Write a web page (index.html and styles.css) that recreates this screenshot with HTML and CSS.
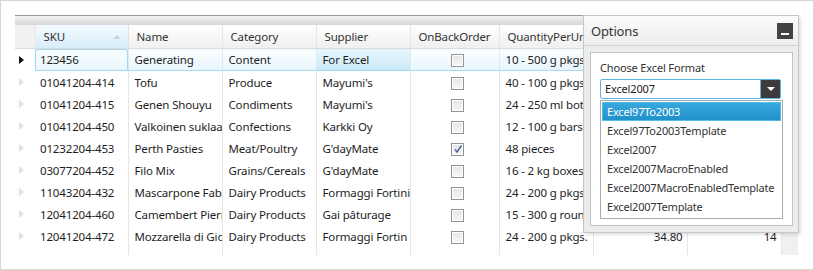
FILE: index.html
```html
<!DOCTYPE html>
<html lang="en">
<head>
  <meta charset="UTF-8" />
  <title>Export to Excel</title>
  <link rel="stylesheet" href="styles.css">
</head>
<body>
  <div class="frame">
    <div class="grid">
      <div class="hscroll"></div>
      <div class="grid-main">
        <table class="data">
          <colgroup>
            <col class="c-rh"><col class="c-sku"><col class="c-std"><col class="c-std"><col class="c-std">
            <col class="c-chk"><col class="c-std"><col class="c-std"><col class="c-std">
          </colgroup>
          <thead>
            <tr>
              <th class="rh"></th>
              <th class="sorted">SKU<span class="sort-arrow"></span></th>
              <th>Name</th>
              <th>Category</th>
              <th>Supplier</th>
              <th>OnBackOrder</th>
              <th>QuantityPerUnit</th>
              <th>UnitPrice</th>
              <th>UnitsInStock</th>
            </tr>
          </thead>
          <tbody id="rows"></tbody>
        </table>
        <div class="vscroll"></div>
      </div>
    </div>

    <div class="options">
      <div class="opt-title">
        <span>Options</span>
        <button class="min-btn"><span></span></button>
      </div>
      <div class="opt-body">
        <div class="opt-box">
          <div class="opt-label">Choose Excel Format</div>
          <div class="combo">
            <span class="combo-value">Excel2007</span>
            <span class="combo-btn"><span class="tri"></span></span>
            <ul class="combo-list">
              <li class="picked">Excel97To2003</li>
              <li>Excel97To2003Template</li>
              <li>Excel2007</li>
              <li>Excel2007MacroEnabled</li>
              <li>Excel2007MacroEnabledTemplate</li>
              <li>Excel2007Template</li>
            </ul>
          </div>
        </div>
      </div>
    </div>
  </div>

  <script>
    const products = [
      ["123456", "Generating", "Content", "For Excel", false, "10 - 500 g pkgs.", "21.00", "22"],
      ["01041204-414", "Tofu", "Produce", "Mayumi's", false, "40 - 100 g pkgs.", "23.25", "35"],
      ["01041204-415", "Genen Shouyu", "Condiments", "Mayumi's", false, "24 - 250 ml bottles", "15.50", "39"],
      ["01041204-450", "Valkoinen suklaa", "Confections", "Karkki Oy", false, "12 - 100 g bars", "16.25", "65"],
      ["01232204-453", "Perth Pasties", "Meat/Poultry", "G'dayMate", true, "48 pieces", "32.80", "0"],
      ["03077204-452", "Filo Mix", "Grains/Cereals", "G'dayMate", false, "16 - 2 kg boxes", "7.00", "38"],
      ["11043204-432", "Mascarpone Fabioli", "Dairy Products", "Formaggi Fortini", false, "24 - 200 g pkgs.", "32.00", "9"],
      ["12041204-460", "Camembert Pierrot", "Dairy Products", "Gai pâturage", false, "15 - 300 g rounds", "34.00", "19"],
      ["12041204-472", "Mozzarella di Giovanni", "Dairy Products", "Formaggi Fortin", false, "24 - 200 g pkgs.", "34.80", "14"]
    ];

    const tbody = document.getElementById("rows");

    products.forEach((p, i) => {
      const tr = document.createElement("tr");
      if (i === 0) tr.className = "current";

      let html = '<td class="rh"><span class="row-arrow"></span></td>';
      html += i === 0
        ? '<td class="sku"><div class="focus">' + p[0] + '</div></td>'
        : '<td class="sku">' + p[0] + '</td>';
      html += '<td>' + p[1] + '</td>';
      html += '<td>' + p[2] + '</td>';
      html += '<td class="supplier">' + p[3] + '</td>';
      html += '<td class="chk"><span class="box' + (p[4] ? ' checked' : '') + '">' +
        (p[4] ? '<svg width="10" height="10" viewBox="0 0 10 10"><path d="M2 5.5 L4 8 L8.5 1.5" fill="none" stroke="#4a5fa8" stroke-width="1.4"/></svg>' : '') +
        '</span></td>';
      html += '<td>' + p[5] + '</td>';
      html += '<td class="num">' + p[6] + '</td>';
      html += '<td class="num">' + p[7] + '</td>';
      tr.innerHTML = html;
      tbody.appendChild(tr);
    });

    // empty strip under the last row, the column lines keep going
    const filler = document.createElement("tr");
    filler.className = "filler";
    filler.innerHTML = '<td class="rh"></td>' + '<td></td>'.repeat(8);
    tbody.appendChild(filler);
  </script>
</body>
</html>
```

FILE: styles.css
```css
body {
  margin: 0;
  font-family: "Noto Sans", sans-serif;
  font-size: 11.5px;
  letter-spacing: -0.15px;
  color: #1e1e1e;
  background: #fff;
}
.frame {
  position: relative;
  width: 814px;
  height: 270px;
  box-sizing: border-box;
  border: 1px solid #d6d6d6;
  padding: 14px;
  overflow: hidden;
}
.grid {
  width: 783px;
}
.hscroll {
  height: 9px;
  border-top: 1px solid #9a9a9a;
  background: linear-gradient(#f2f2f2, #d6d6d6);
}
.grid-main {
  display: flex;
}
.vscroll {
  width: 17px;
  height: 206px;
  margin-top: 24px;
  background: #f0f0f0;
}
.data {
  width: 766px;
  border-collapse: collapse;
  table-layout: fixed;
}
.c-rh { width: 20px; }
.c-sku { width: 93px; }
.c-std { width: 94px; }
.c-chk { width: 89px; }

th {
  height: 23px;
  padding: 0 8px;
  text-align: left;
  font-weight: normal;
  color: #333;
  background: linear-gradient(#ffffff, #efefef);
  border-right: 1px solid #e6e6e6;
  border-bottom: 1px solid #dcdcdc;
  white-space: nowrap;
  overflow: hidden;
}
th.rh {
  padding: 0;
  background: #f1f1f1;
}
th.sorted {
  position: relative;
  background: linear-gradient(#f4fafe, #d7edf9);
  border-right: 1px solid #e0e0e0;
}
.sort-arrow {
  position: absolute;
  right: 7px;
  top: 10px;
  border-left: 4px solid transparent;
  border-right: 4px solid transparent;
  border-bottom: 4px solid #c9d3da;
}
td {
  height: 22px;
  padding: 0 6px;
  border-right: 1px solid #e6e6e6;
  white-space: nowrap;
  overflow: hidden;
}
td.rh {
  padding: 0 0 0 4px;
  border-right: none;
}
td.sku {
  padding-left: 5px;
}
td.num {
  text-align: right;
  padding-right: 4px;
}
td.chk {
  text-align: center;
  padding: 0 0 0 5px;
}
.row-arrow {
  display: block;
  width: 0;
  height: 0;
  border-top: 4px solid transparent;
  border-bottom: 4px solid transparent;
  border-left: 5px solid #e0e0e0;
}
.current .row-arrow {
  border-left-color: #111;
}
.current td {
  height: 20px;
  background: linear-gradient(#fafdff, #e8f6fd);
  border-bottom: 1px solid #a8daf3;
  border-right-color: #d6ecf8;
}
.current td.rh {
  background: #fff;
  border-bottom: none;
}
.current td.supplier {
  background: linear-gradient(#e9f6fd, #c9e8f8);
}
.current td.sku {
  padding: 0;
}
.focus {
  height: 20px;
  line-height: 20px;
  padding-left: 4px;
  border: 1px solid #9fd6f2;
  border-bottom: none;
  border-radius: 3px 3px 0 0;
}
.box {
  display: inline-block;
  width: 11px;
  height: 11px;
  vertical-align: middle;
  border: 1px solid #949494;
  background: linear-gradient(#e4e4e4, #f7f7f7);
  box-shadow: inset 0 0 0 1px #fff;
  position: relative;
}
.box svg {
  position: absolute;
  left: 1px;
  top: 0;
}
.filler td {
  height: 8px;
}

/* options panel floating over the grid */
.options {
  position: absolute;
  left: 582px;
  top: 14px;
  width: 216px;
  height: 218px;
  box-sizing: border-box;
  border: 1px solid #c6c6c6;
  background: #ececec;
  box-shadow: 2px 2px 3px rgba(0,0,0,0.12);
}
.opt-title {
  height: 29px;
  display: flex;
  align-items: center;
  justify-content: space-between;
  padding: 0 5px 0 7px;
  background: linear-gradient(#fbfbfb, #ededed);
  border-bottom: 1px solid #d2d2d2;
  font-size: 13px;
  color: #333;
}
.min-btn {
  width: 16px;
  height: 16px;
  padding: 0;
  border: none;
  background: #434343;
  display: flex;
  align-items: flex-end;
  justify-content: center;
}
.min-btn span {
  width: 8px;
  height: 2px;
  margin-bottom: 4px;
  background: #fff;
}
.opt-body {
  padding: 6px 5px 5px 6px;
}
.opt-box {
  height: 174px;
  box-sizing: border-box;
  border: 1px solid #c2c2c2;
  background: #fff;
  padding: 8px 9px;
}
.opt-label {
  font-size: 11px;
  color: #333;
  line-height: 14px;
}
.combo {
  position: relative;
  margin-top: 4px;
  width: 181px;
  height: 20px;
  box-sizing: border-box;
  border: 1px solid #5bb6e3;
  border-radius: 2px;
  display: flex;
}
.combo-value {
  flex: 1;
  line-height: 18px;
  padding-left: 4px;
  font-size: 11px;
}
.combo-btn {
  width: 19px;
  background: #3c3c3c;
  border-left: 1px solid #5bb6e3;
  display: flex;
  align-items: center;
  justify-content: center;
}
.tri {
  border-left: 4px solid transparent;
  border-right: 4px solid transparent;
  border-top: 4px solid #fff;
}
.combo-list {
  position: absolute;
  left: -1px;
  top: 20px;
  width: 183px;
  box-sizing: border-box;
  margin: 0;
  padding: 1px 1px 2px;
  list-style: none;
  background: #fff;
  border: 1px solid #ababab;
}
.combo-list li {
  height: 19px;
  line-height: 19px;
  padding-left: 5px;
  font-size: 11px;
  letter-spacing: -0.2px;
  color: #333;
  white-space: nowrap;
}
.combo-list li.picked {
  color: #fff;
  background: linear-gradient(#3aa9df, #1f8fc8);
  box-shadow: inset 0 0 0 1px #52bdec;
}
```
